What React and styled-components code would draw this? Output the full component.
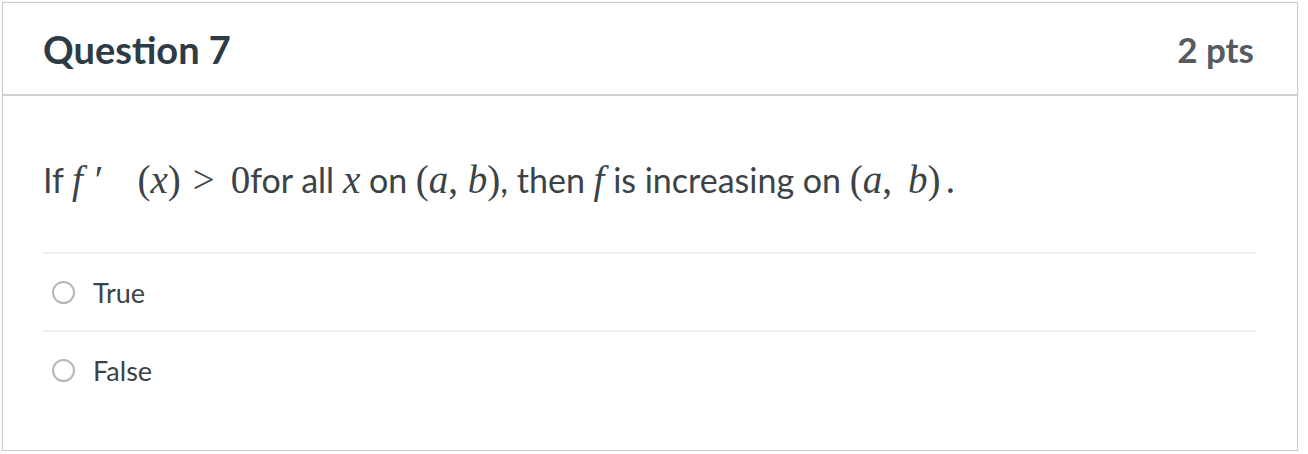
import React from "react";
import styled, { createGlobalStyle } from "styled-components";

const GlobalStyle = createGlobalStyle`
    body {
        margin: 0;
        background: #ffffff;
        font-family: Lato, "Liberation Sans", sans-serif;
    }
`;

const Card = styled.div`
    margin: 2px 0 0 2px;
    width: 1294px;
    height: 447px;
    border: 1px solid #c7cdd1;
    box-shadow: 0 0 1px #d8dcdf;
    background: #ffffff;
    display: flex;
    flex-direction: column;
`;

const Header = styled.div`
    height: 91px;
    padding: 0 43px 0 40px;
    display: flex;
    align-items: center;
    justify-content: space-between;
    border-bottom: 2px solid #cfd3d6;
`;

const Title = styled.h2`
    margin: 0;
    font-size: 38px;
    font-weight: 700;
    color: #2d3b45;
`;

const Points = styled.span`
    font-size: 35px;
    font-weight: 700;
    color: #565b5f;
`;

const Body = styled.div`
    padding: 0 41px 0 40px;
`;

const QuestionText = styled.p`
    margin: 0;
    padding: 64px 0 52px;
    font-size: 34px;
    line-height: 40px;
    color: #3b4348;
`;

const MathVar = styled.span`
    font-family: "Liberation Serif", "DejaVu Serif", serif;
    font-style: ${(props) => (props.upright ? "normal" : "italic")};
    font-size: 39px;
    white-space: pre;
`;

const Space = styled.span`
    display: inline-block;
    width: ${(props) => props.w}px;
`;

const Answers = styled.div`
    display: flex;
    flex-direction: column;
`;

const Answer = styled.label`
    height: 76px;
    display: flex;
    align-items: center;
    gap: 18px;
    padding-left: 9px;
    border-top: 2px solid #eceeef;
    font-size: 27px;
    color: #3b4348;
`;

const Radio = styled.span`
    width: 19px;
    height: 19px;
    border: 2px solid #b4b8bb;
    border-radius: 50%;
    flex-shrink: 0;
`;

function App() {
    return (
        <>
            <GlobalStyle />
            <Card>
                <Header>
                    <Title>Question 7</Title>
                    <Points>2 pts</Points>
                </Header>
                <Body>
                    <QuestionText>
                        If <MathVar>f</MathVar>
                        <Space w={12} />
                        <MathVar upright>{"\u2032"}</MathVar>
                        <Space w={34} />
                        <MathVar upright>(</MathVar>
                        <MathVar>x</MathVar>
                        <MathVar upright>)</MathVar>
                        <Space w={12} />
                        <MathVar upright>{">"}</MathVar>
                        <Space w={16} />
                        <MathVar upright>0</MathVar>for all{" "}
                        <MathVar>x</MathVar> on <MathVar upright>(</MathVar>
                        <MathVar>a</MathVar>
                        <MathVar upright>{", "}</MathVar>
                        <MathVar>b</MathVar>
                        <MathVar upright>)</MathVar>, then <MathVar>f</MathVar> is increasing on{" "}
                        <MathVar upright>(</MathVar>
                        <MathVar>a</MathVar>
                        <MathVar upright>,</MathVar>
                        <Space w={16} />
                        <MathVar>b</MathVar>
                        <MathVar upright>)</MathVar>
                        <Space w={5} />
                        <MathVar upright>.</MathVar>
                    </QuestionText>
                    <Answers>
                        <Answer>
                            <Radio />
                            True
                        </Answer>
                        <Answer>
                            <Radio />
                            False
                        </Answer>
                    </Answers>
                </Body>
            </Card>
        </>
    );
}

export default App;
